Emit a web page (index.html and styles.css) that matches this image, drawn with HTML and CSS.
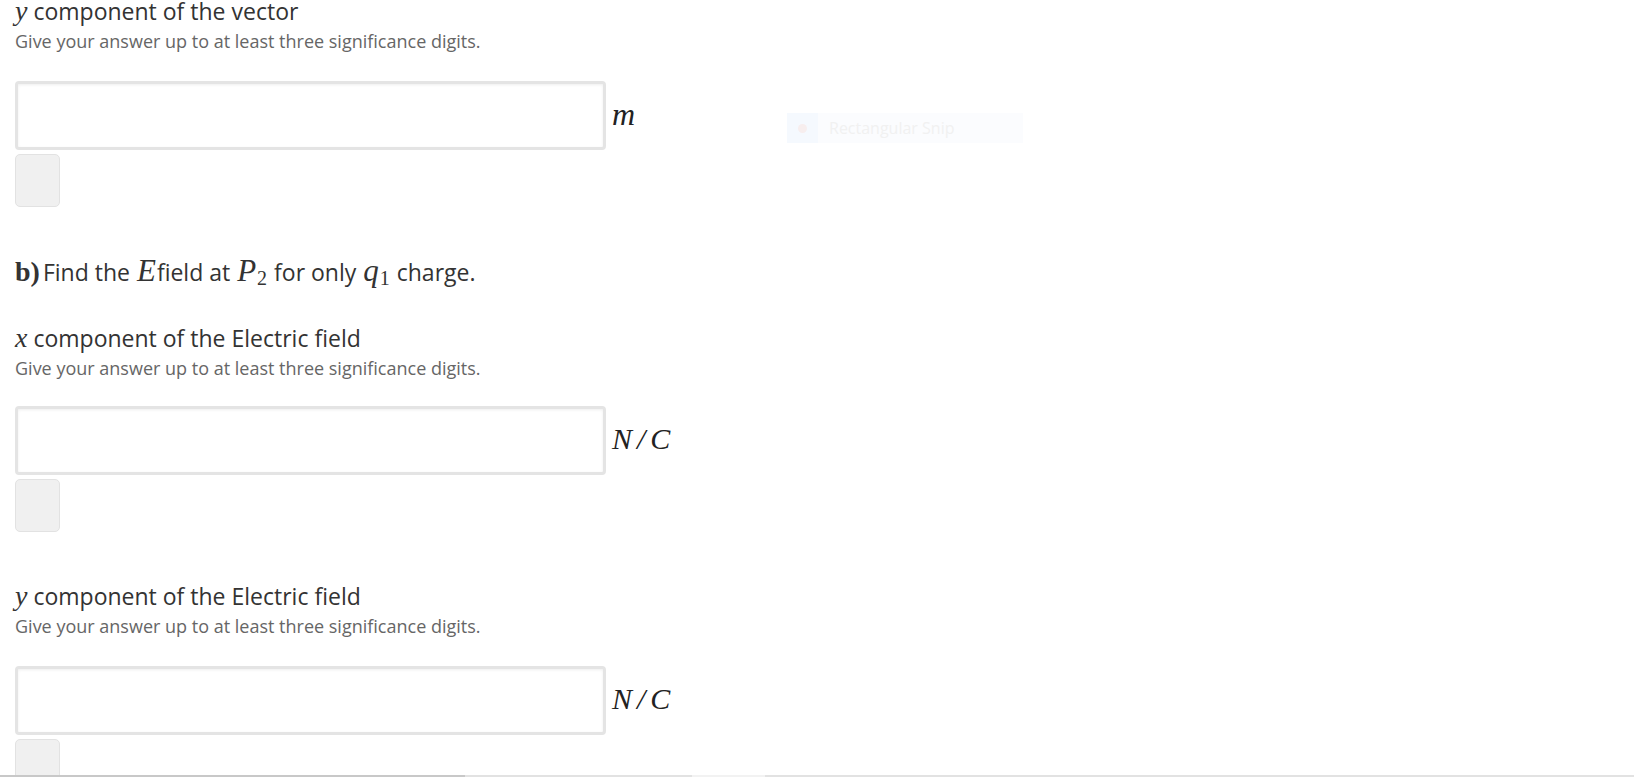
FILE: index.html
```html
<!DOCTYPE html>
<html>
<head>
<meta charset="utf-8">
<link rel="stylesheet" href="styles.css">
</head>
<body>
<div class="page">
  <section class="q first">
    <div class="q-title"><span class="mi">y</span> component of the vector</div>
    <div class="q-hint">Give your answer up to at least three significance digits.</div>
    <div class="answer-row">
      <input class="answer" type="text">
      <span class="unit unit-m">m</span>
    </div>
    <button class="check" type="button"></button>
  </section>

  <div class="part">
    <span class="bold">b)</span>Find the <span class="mi big">E</span>field at <span class="mi big">P<sub>2</sub></span> for only <span class="mi big">q<sub>1</sub></span> charge.
  </div>

  <section class="q">
    <div class="q-title"><span class="mi">x</span> component of the Electric field</div>
    <div class="q-hint">Give your answer up to at least three significance digits.</div>
    <div class="answer-row row-2">
      <input class="answer" type="text">
      <span class="unit">N/C</span>
    </div>
    <button class="check" type="button"></button>
  </section>

  <section class="q">
    <div class="q-title"><span class="mi">y</span> component of the Electric field</div>
    <div class="q-hint">Give your answer up to at least three significance digits.</div>
    <div class="answer-row">
      <input class="answer" type="text">
      <span class="unit">N/C</span>
    </div>
    <button class="check" type="button"></button>
  </section>
</div>

<div class="snip">
  <span class="snip-icon"><span class="snip-dot"></span></span>
  <span class="snip-label">Rectangular Snip</span>
</div>

<div class="hscroll">
  <span class="seg seg1"></span>
  <span class="seg seg2"></span>
  <span class="seg seg3"></span>
  <span class="seg seg4"></span>
</div>
</body>
</html>
```

FILE: styles.css
```css
html, body {
  margin: 0;
  padding: 0;
  height: 777px;
  overflow: hidden;
  background: #fff;
}

body {
  font-family: "Open Sans", "Noto Sans", sans-serif;
  color: #333;
}

.page {
  padding: 0 15px;
  display: flex;
  flex-direction: column;
}

.q {
  display: flex;
  flex-direction: column;
  align-items: flex-start;
}

.q.first {
  margin-top: -4px;
}

.q-title {
  font-size: 23px;
  line-height: 30px;
  color: #333;
  white-space: nowrap;
}

.q-hint {
  margin-top: 4px;
  font-size: 18px;
  line-height: 22px;
  color: #666;
  white-space: nowrap;
}

.mi {
  font-family: "Liberation Serif", "DejaVu Serif", serif;
  font-style: italic;
  font-size: 28px;
}

.answer-row {
  margin-top: 29px;
  display: flex;
  align-items: center;
  gap: 6px;
}

.answer-row.row-2 {
  margin-top: 27px;
}

.answer {
  box-sizing: border-box;
  width: 591px;
  height: 69px;
  margin: 0;
  border: 3px solid #e4e4e4;
  border-radius: 4px;
  box-shadow: inset 0 1px 3px rgba(0, 0, 0, 0.07);
  background: #fff;
  outline: none;
}

.unit {
  font-family: "Liberation Serif", "DejaVu Serif", serif;
  font-style: italic;
  font-size: 30px;
  letter-spacing: 5px;
  color: #222;
  margin-top: -4px;
}

.unit-m {
  margin-top: -2px;
  letter-spacing: 0;
  font-size: 32px;
}

.check {
  box-sizing: border-box;
  width: 45px;
  height: 53px;
  margin-top: 4px;
  padding: 0;
  border: 1px solid #e2e2e2;
  border-radius: 5px;
  background: #f0f0f0;
}

.part {
  margin-top: 49px;
  margin-bottom: 36px;
  font-size: 23px;
  line-height: 30px;
  color: #333;
  white-space: nowrap;
}

.part .bold {
  font-family: "Liberation Serif", "DejaVu Serif", serif;
  font-weight: bold;
  font-size: 28px;
  margin-right: 3px;
}

.part .big {
  font-size: 31px;
  margin: 0 1px;
}

.part sub {
  font-style: normal;
  font-size: 20px;
  vertical-align: -4px;
  line-height: 0;
  margin-left: 1px;
}

.q + .q {
  margin-top: 49px;
}

.snip {
  position: absolute;
  left: 787px;
  top: 113px;
  width: 236px;
  height: 30px;
  display: flex;
  align-items: center;
  background: #fbfcfe;
}

.snip-icon {
  width: 31px;
  height: 30px;
  background: #f5f9fe;
  display: flex;
  align-items: center;
  justify-content: center;
}

.snip-dot {
  width: 9px;
  height: 9px;
  border-radius: 50%;
  background: #f7eeee;
}

.snip-label {
  margin-left: 11px;
  font-family: "Open Sans", sans-serif;
  font-size: 16px;
  color: #f1f1f1;
}

.hscroll {
  position: absolute;
  left: 0;
  right: 0;
  bottom: 0;
  height: 2px;
  display: flex;
}

.seg { display: block; height: 100%; }
.seg1 { width: 465px; background: #c8c8c8; }
.seg2 { width: 227px; background: #e2e2e2; }
.seg3 { width: 73px; background: #f2f2f2; }
.seg4 { flex: 1; background: #e2e2e2; }
```
